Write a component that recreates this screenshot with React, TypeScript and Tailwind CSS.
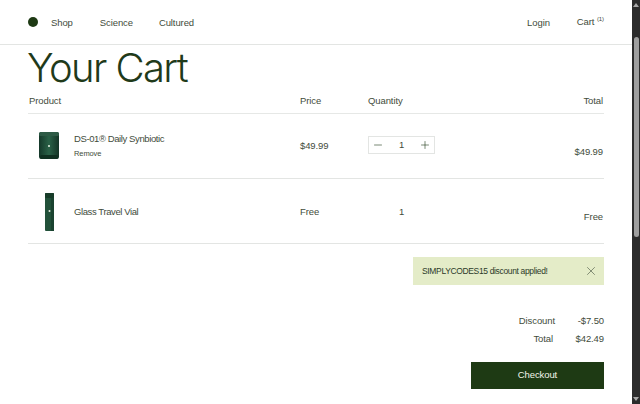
import { Minus, Plus, X } from "lucide-react";

const GREEN = "text-[#1f3a1a]";

function Jar() {
  return (
    <svg width="20" height="27" viewBox="0 0 20 27" className="block">
      <defs>
        <linearGradient id="jar" x1="0" y1="0" x2="1" y2="0">
          <stop offset="0" stopColor="#15382a" />
          <stop offset="0.5" stopColor="#2a6147" />
          <stop offset="1" stopColor="#143426" />
        </linearGradient>
      </defs>
      <rect x="0" y="0" width="20" height="27" rx="2.5" fill="url(#jar)" />
      <rect x="0" y="0" width="20" height="4" rx="1.5" fill="#2d5a45" />
      <rect x="1" y="23" width="18" height="4" rx="1.5" fill="#103021" />
      <circle cx="10" cy="14" r="1" fill="#e8f0e4" />
    </svg>
  );
}

function Vial() {
  return (
    <svg width="9" height="38" viewBox="0 0 9 38" className="block">
      <rect x="0" y="0" width="9" height="38" rx="1" fill="#22513a" />
      <rect x="0" y="0" width="9" height="5" rx="1" fill="#173c29" />
      <rect x="6" y="5" width="3" height="33" fill="#1a4330" />
      <circle cx="4.5" cy="18" r="1" fill="#e8f0e4" />
    </svg>
  );
}

function ScrollBar() {
  return (
    <div className="w-[8px] h-[404px] bg-[#2c2c2c] flex flex-col items-center shrink-0">
      <svg width="6" height="4" viewBox="0 0 6 4" className="mt-[3px] shrink-0">
        <path d="M3 0 L6 4 L0 4 Z" fill="#a8a8a8" />
      </svg>
      <div className="w-[5px] h-[200px] mt-[30px] bg-[#9f9f9f] rounded-[3px]" />
      <svg width="6" height="4" viewBox="0 0 6 4" className="mt-auto mb-[3px] shrink-0">
        <path d="M0 0 L6 0 L3 4 Z" fill="#a8a8a8" />
      </svg>
    </div>
  );
}

export default function App() {
  return (
    <div className="flex w-[640px] h-[404px] overflow-hidden bg-white font-['Liberation_Sans',Arial,sans-serif] text-[9.5px] tracking-[-0.1px] text-[#3f4c3b]">
      <div className="flex-1 min-w-0">
        <header className="h-[45px] border-b border-[#e3e5e3] flex items-center pl-[28px] pr-[28px] pt-[3px]">
          <span className="w-[10px] h-[10px] rounded-full bg-[#1e3a14] mr-[13px] -mt-[3px]" />
          <a className="mr-[27px]">Shop</a>
          <a className="mr-[26px]">Science</a>
          <a>Cultured</a>
          <a className="ml-auto mr-[27px]">Login</a>
          <a className="-mt-[2px]">
            Cart <sup className="text-[6px] -top-[4px]">(1)</sup>
          </a>
        </header>

        <main className="pl-[28px] pr-[28px]">
          <h1 className={`font-['Inter',sans-serif] text-[40px] leading-[45px] font-light tracking-[-1.6px] -ml-[1px] ${GREEN}`}>Your Cart</h1>

          <div className="grid grid-cols-[271px_68px_1fr_60px] h-[24px] border-b border-[#e6e8e6] pl-[1px] pr-[1px] pt-[4px]">
            <span>Product</span>
            <span>Price</span>
            <span>Quantity</span>
            <span className="text-right">Total</span>
          </div>

          <div className="grid grid-cols-[271px_68px_1fr_60px] h-[65px] border-b border-[#e3e5e3] pl-[1px] pr-[1px]">
            <div className="flex items-start pt-[18px]">
              <div className="w-[45px] pl-[10px]">
                <Jar />
              </div>
              <div>
                <div className="leading-[14px] tracking-[-0.4px]">DS-01® Daily Synbiotic</div>
                <div className="text-[7.5px] mt-[2px] leading-[12px]">Remove</div>
              </div>
            </div>
            <div className="pt-[25px]">$49.99</div>
            <div className="pt-[22px]">
              <div className="w-[67px] h-[18px] border border-[#e3e5e3] flex items-center justify-between px-[3px]">
                <Minus size={12} strokeWidth={1.2} className="text-[#1f3a1a]" />
                <span>1</span>
                <Plus size={12} strokeWidth={1.2} className="text-[#1f3a1a]" />
              </div>
            </div>
            <div className="text-right pt-[31px]">$49.99</div>
          </div>

          <div className="grid grid-cols-[271px_68px_1fr_60px] h-[65px] border-b border-[#e3e5e3] pl-[1px] pr-[1px]">
            <div className="flex items-center pt-[2px]">
              <div className="w-[45px] pl-[16px]">
                <Vial />
              </div>
              <div className="tracking-[-0.4px]">Glass Travel Vial</div>
            </div>
            <div className="flex items-center pt-[2px]">Free</div>
            <div className="flex items-center pt-[2px] pl-[31px]">1</div>
            <div className="text-right pt-[31px]">Free</div>
          </div>

          <div className="flex flex-col items-end">
            <div className="w-[191px] h-[28px] mt-[13px] bg-[#e4ecc8] flex items-center justify-between pl-[9px] pr-[6px] text-[8.5px] tracking-[-0.35px] text-[#2c3a28]">
              <span>SIMPLYCODES15 discount applied!</span>
              <X size={14} strokeWidth={1} className="text-[#3c4a38]" />
            </div>

            <div className="mt-[27px] grid grid-cols-[auto_49px] text-right leading-[18px]">
              <span>Discount</span>
              <span>-$7.50</span>
              <span className="pr-[2px]">Total</span>
              <span>$42.49</span>
            </div>

            <button className="mt-[14px] w-[133px] h-[27px] bg-[#1e3a14] text-[#f2f5ea] flex items-center justify-center">
              Checkout
            </button>
          </div>
        </main>
      </div>
      <ScrollBar />
    </div>
  );
}
